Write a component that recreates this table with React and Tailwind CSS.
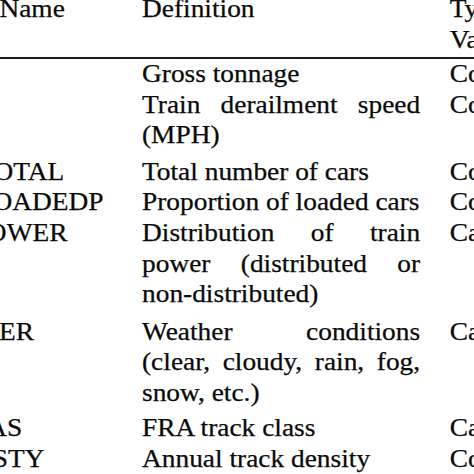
import React from "react";

const rows = [
  { name: "", nameCls: "", def: "Gross tonnage", type: "Continuous", mt: "" },
  { name: "", nameCls: "", def: "Train derailment speed (MPH)", type: "Continuous", mt: "" },
  { name: "OTAL", nameCls: "ml-[-6px]", def: "Total number of cars", type: "Continuous", mt: "mt-[6px]" },
  { name: "OADEDP", nameCls: "ml-[-6.8px]", def: "Proportion of loaded cars", type: "Continuous", mt: "" },
  { name: "OWER", nameCls: "ml-[-12px]", def: "Distribution of train power (distributed or non-distributed)", type: "Categorical", mt: "" },
  { name: "ER", nameCls: "ml-[-1px]", def: "Weather conditions (clear, cloudy, rain, fog, snow, etc.)", type: "Categorical", mt: "mt-[7px]" },
  { name: "AS", nameCls: "ml-[-11.6px]", def: "FRA track class", type: "Categorical", mt: "mt-[4.5px]" },
  { name: "STY", nameCls: "ml-[-6.6px]", def: "Annual track density", type: "Continuous", mt: "" },
];

export default function App() {
  return (
    <div className="w-[474px] h-[474px] overflow-hidden bg-white text-[#0a0a0a] font-['Liberation_Serif','Times_New_Roman',serif] [-webkit-text-stroke:0.25px_#0a0a0a]">
      <div className="w-[440px] origin-top-left scale-x-[1.095] mt-[-5.6px] text-[25px] leading-[30.6px]">
        <div className="grid grid-cols-[129.7px_254px_1fr]">
          <div className="whitespace-nowrap ml-[-0.5px]">Name</div>
          <div className="whitespace-nowrap">Definition</div>
          <div className="pl-[27px] whitespace-nowrap">
            <div>Type of</div>
            <div>Variable</div>
          </div>
        </div>
        <div className="mt-[1.5px] h-[2px] w-full bg-[#1c1c1c]" />
        {rows.map((r, i) => (
          <div key={i} className={`grid grid-cols-[129.7px_254px_1fr] ${r.mt}`}>
            <div className="whitespace-nowrap overflow-visible">
              <span className={`inline-block ${r.nameCls}`}>{r.name}</span>
            </div>
            <div className="text-justify">{r.def}</div>
            <div className="pl-[27px] whitespace-nowrap">{r.type}</div>
          </div>
        ))}
      </div>
    </div>
  );
}
